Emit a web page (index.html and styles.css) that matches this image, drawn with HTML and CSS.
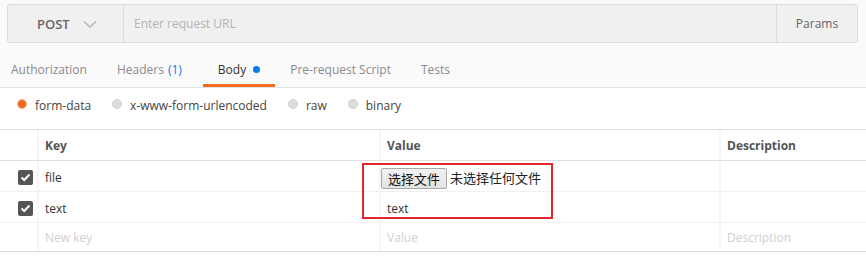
FILE: index.html
```html
<!DOCTYPE html>
<html>
<head>
<meta charset="utf-8">
<link rel="stylesheet" href="styles.css">
</head>
<body>
<div class="top">
  <div class="urlbar">
    <div class="method">POST
      <svg class="chev" width="14" height="9" viewBox="0 0 14 9"><path d="M1 1.5 L7 7 L13 1.5" fill="none" stroke="#b8b8b8" stroke-width="1.6"/></svg>
    </div>
    <div class="url">Enter request URL</div>
    <div class="params">Params</div>
  </div>
  <div class="tabs">
    <div class="tab first">Authorization</div>
    <div class="tab">Headers <span class="count">(1)</span></div>
    <div class="tab active">Body <span class="dot"></span></div>
    <div class="tab">Pre-request Script</div>
    <div class="tab">Tests</div>
  </div>
</div>
<div class="modes">
  <label class="mode"><span class="radio on"></span>form-data</label>
  <label class="mode"><span class="radio"></span>x-www-form-urlencoded</label>
  <label class="mode"><span class="radio"></span>raw</label>
  <label class="mode"><span class="radio"></span>binary</label>
</div>
<div class="table">
  <div class="row head">
    <div class="c0"></div>
    <div class="c key">Key</div>
    <div class="c val">Value</div>
    <div class="c desc">Description</div>
  </div>
  <div class="row data">
    <div class="c0"><span class="cb"><svg width="11" height="9" viewBox="0 0 11 9"><path d="M1.5 4.5 L4.2 7 L9.5 1.5" fill="none" stroke="#fff" stroke-width="2"/></svg></span></div>
    <div class="c key">file</div>
    <div class="c val"><span class="filebtn">选择文件</span><span class="nofile">未选择任何文件</span></div>
    <div class="c desc"></div>
  </div>
  <div class="row data">
    <div class="c0"><span class="cb"><svg width="11" height="9" viewBox="0 0 11 9"><path d="M1.5 4.5 L4.2 7 L9.5 1.5" fill="none" stroke="#fff" stroke-width="2"/></svg></span></div>
    <div class="c key">text</div>
    <div class="c val">text</div>
    <div class="c desc"></div>
  </div>
  <div class="row last">
    <div class="c0"></div>
    <div class="c key ph">New key</div>
    <div class="c val ph">Value</div>
    <div class="c desc ph">Description</div>
  </div>
  <div class="highlight"></div>
</div>
</body>
</html>
```
FILE: styles.css
```css
html, body { margin: 0; padding: 0; }
body {
  width: 866px;
  height: 256px;
  overflow: hidden;
  background: #fff;
  font-family: "Open Sans", "Noto Sans CJK SC", sans-serif;
  font-size: 12px;
  color: #333;
}
.top {
  background: #fafafa;
  padding: 4px 8px 0 7px;
  border-bottom: 1px solid #e2e2e2;
  height: 83px;
  box-sizing: content-box;
}
.urlbar {
  display: flex;
  height: 39px;
  box-sizing: border-box;
  background: #f0f0f0;
  border: 1px solid #dcdcdc;
  border-radius: 3px;
}
.method {
  width: 116px;
  box-sizing: border-box;
  display: flex;
  align-items: center;
  padding-left: 29px;
  font-size: 13px;
  font-weight: 600;
  color: #666;
  border-right: 1px solid #dcdcdc;
}
.chev { margin-left: 13px; margin-top: 1px; }
.url {
  flex: 1;
  display: flex;
  align-items: center;
  padding-left: 10px;
  color: #b4b4b4;
}
.params {
  width: 80px;
  border-left: 1px solid #dcdcdc;
  display: flex;
  align-items: center;
  justify-content: center;
  color: #666;
}
.tabs {
  display: flex;
  height: 44px;
  margin-left: -7px;
}
.tab {
  padding: 11px 15px 0;
  display: flex;
  align-items: center;
  color: #8a8a8a;
  box-sizing: border-box;
  border-bottom: 3px solid transparent;
}
.tab.first { padding-left: 11px; }
.tab.active { color: #333; border-bottom-color: #f26b21; }
.count { color: #097bed; margin-left: 4px; margin-right: 6px; }
.dot {
  width: 7px; height: 7px;
  border-radius: 50%;
  background: #097bed;
  margin-left: 7px;
  display: inline-block;
}
.modes {
  display: flex;
  height: 41px;
  align-items: center;
  padding-left: 17px;
  padding-bottom: 7px;
  box-sizing: border-box;
}
.mode {
  display: flex;
  align-items: center;
  color: #444;
  margin-right: 21px;
}
.radio {
  width: 10px; height: 10px;
  box-sizing: border-box;
  border-radius: 50%;
  background: #dcdcdc;
  border: 1px solid #d0d0d0;
  margin-right: 8px;
  margin-top: -3px;
}
.radio.on { background: #f26b21; border-color: #f7b48e; }
.table {
  position: relative;
  border-top: 1px solid #e0e0e0;
  border-bottom: 1px solid #dedede;
}
.row {
  display: flex;
  height: 31px;
  box-sizing: border-box;
  border-bottom: 1px solid #f0f0f0;
}
.row.data { padding-top: 2px; }
.row.head { height: 31px; border-bottom: 1px solid #e0e0e0; }
.row.last { height: 28px; border-bottom: none; }
.c0 {
  width: 37px;
  display: flex;
  align-items: center;
  padding-left: 18px;
  box-sizing: border-box;
}
.c {
  border-left: 2px solid #f6f6f6;
  display: flex;
  align-items: center;
  padding-left: 6px;
  box-sizing: border-box;
}
.row.data .c { margin-top: -2px; padding-top: 2px; }
.key { width: 342px; }
.val { width: 340px; }
.desc { flex: 1; }
.head .c { font-weight: 700; color: #555; }
.ph { color: #d0d0d0; }
.cb {
  width: 15px; height: 15px;
  background: #555;
  border-radius: 2px;
  display: flex;
  align-items: center;
  justify-content: center;
}
.filebtn {
  font-family: "Noto Sans CJK SC", sans-serif;
  font-size: 13px;
  color: #111;
  background: linear-gradient(#f2f2f2, #e2e2e2);
  border: 1px solid #a8a8a8;
  border-radius: 2px;
  padding: 0 6px;
  height: 21px;
  line-height: 19px;
  box-sizing: border-box;
  margin-left: -6px;
  margin-top: 2px;
}
.nofile {
  font-family: "Noto Sans CJK SC", sans-serif;
  font-size: 13px;
  color: #222;
  margin-left: 3px;
  margin-top: 0px;
}
.highlight {
  position: absolute;
  left: 362px;
  top: 33px;
  width: 191px;
  height: 56px;
  box-sizing: border-box;
  border: 2px solid #e5262c;
}
```
